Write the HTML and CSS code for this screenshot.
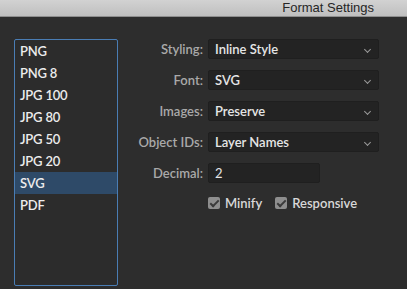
FILE: index.html
```html
<!DOCTYPE html>
<html>
<head>
    <meta charset="UTF-8">
    <link rel="stylesheet" href="styles.css">
</head>
<body>
    <!-- Title bar -->
    <div class="titlebar">Format Settings</div>

    <div class="panel">
        <!-- Format list -->
        <ul class="format-list">
            <li>PNG</li>
            <li>PNG 8</li>
            <li>JPG 100</li>
            <li>JPG 80</li>
            <li>JPG 50</li>
            <li>JPG 20</li>
            <li class="selected">SVG</li>
            <li>PDF</li>
        </ul>

        <!-- SVG options -->
        <div class="options">
            <label class="opt-label">Styling:</label>
            <div class="select">Inline Style<span class="chevron"></span></div>

            <label class="opt-label">Font:</label>
            <div class="select">SVG<span class="chevron"></span></div>

            <label class="opt-label">Images:</label>
            <div class="select">Preserve<span class="chevron"></span></div>

            <label class="opt-label">Object IDs:</label>
            <div class="select">Layer Names<span class="chevron"></span></div>

            <label class="opt-label">Decimal:</label>
            <div class="text-input">2</div>

            <div class="checks">
                <span class="check"><span class="box"></span>Minify</span>
                <span class="check"><span class="box"></span>Responsive</span>
            </div>
        </div>
    </div>
</body>
</html>
```

FILE: styles.css
```css
/* Base */
body {
    margin: 0;
    width: 407px;
    height: 289px;
    overflow: hidden;
    background-color: #2d2d2d;
    font-family: Lato, 'Liberation Sans', Arial, sans-serif;
    font-size: 13px;
}

/* Title bar */
.titlebar {
    height: 16px;
    line-height: 15px;
    padding-right: 33px;
    text-align: right;
    font-family: 'Liberation Sans', Arial, sans-serif;
    font-size: 13px;
    color: #262626;
    background: linear-gradient(#d2d2d2, #bfbfbf);
    border-bottom: 1px solid #8e8e8e;
}

/* Main panel */
.panel {
    display: flex;
    align-items: flex-start;
    padding: 22px 0 0 14px;
}

/* Format list */
.format-list {
    list-style: none;
    margin: 0;
    padding: 0;
    width: 102px;
    height: 245px;
    border: 1px solid #4a7db4;
    border-radius: 2px;
    background-color: #2c2c2c;
}

.format-list li {
    height: 22px;
    line-height: 23px;
    padding-left: 5px;
    color: #ececec;
    font-weight: 600;
    letter-spacing: -0.2px;
}

.format-list li.selected {
    background-color: #2e4a68;
}

/* Options grid */
.options {
    display: grid;
    grid-template-columns: 84px 171px;
    grid-auto-rows: 20px;
    column-gap: 5px;
    row-gap: 11px;
    margin-left: 1px;
}

.opt-label {
    text-align: right;
    line-height: 20px;
    color: #a9a9a9;
    font-weight: 600;
}

.select,
.text-input {
    position: relative;
    box-sizing: border-box;
    height: 20px;
    line-height: 19px;
    padding-left: 6px;
    background-color: #232323;
    border: 1px solid #1f1f1f;
    border-radius: 2px;
    color: #e6e6e6;
    font-weight: 600;
}

.text-input {
    width: 112px;
    font-weight: normal;
}

.chevron {
    position: absolute;
    right: 8px;
    top: 7px;
    width: 4px;
    height: 4px;
    border-right: 1px solid #9a9a9a;
    border-bottom: 1px solid #9a9a9a;
    transform: rotate(45deg);
}

/* Checkboxes */
.checks {
    grid-column: 2;
    display: flex;
    gap: 13px;
    margin-top: -3px;
}

.check {
    display: flex;
    align-items: center;
    gap: 5px;
    color: #d8d8d8;
    font-weight: 600;
}

.box {
    position: relative;
    width: 12px;
    height: 12px;
    border-radius: 2px;
    background-color: #8e8e8e;
}

.box::after {
    content: "";
    position: absolute;
    left: 4px;
    top: 1px;
    width: 3px;
    height: 7px;
    border-right: 2px solid #3a3a3a;
    border-bottom: 2px solid #3a3a3a;
    transform: rotate(45deg);
}
```
